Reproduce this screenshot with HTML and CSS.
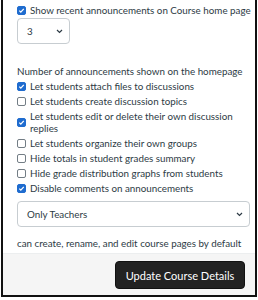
FILE: index.html
```html
<!DOCTYPE html>
<html>
<head>
    <title>Course Settings</title>
    <link rel="stylesheet" href="styles.css">
</head>
<body>
    <div class="panel">
        <div class="content">
            <div class="check"><span class="box on"></span><span>Show recent announcements on Course home page</span></div>
            <div class="select small">
                <span>3</span>
                <svg class="chev" width="7" height="5" viewBox="0 0 7 5"><path d="M1 1l2.5 2.5L6 1" fill="none" stroke="#2d3b45" stroke-width="1.2"/></svg>
            </div>
            <p class="hint first">Number of announcements shown on the homepage</p>
            <div class="options">
                <div class="check"><span class="box on"></span><span>Let students attach files to discussions</span></div>
                <div class="check"><span class="box"></span><span>Let students create discussion topics</span></div>
                <div class="check"><span class="box on"></span><span>Let students edit or delete their own discussion replies</span></div>
                <div class="check"><span class="box"></span><span>Let students organize their own groups</span></div>
                <div class="check"><span class="box"></span><span>Hide totals in student grades summary</span></div>
                <div class="check"><span class="box"></span><span>Hide grade distribution graphs from students</span></div>
                <div class="check"><span class="box on"></span><span>Disable comments on announcements</span></div>
            </div>
            <div class="select wide">
                <span>Only Teachers</span>
                <svg class="chev" width="7" height="5" viewBox="0 0 7 5"><path d="M1 1l2.5 2.5L6 1" fill="none" stroke="#2d3b45" stroke-width="1.2"/></svg>
            </div>
            <p class="hint last">can create, rename, and edit course pages by default</p>
        </div>
        <div class="footer">
            <button class="btn">Update Course Details</button>
        </div>
    </div>
</body>
</html>
```

FILE: styles.css
```css
body {
    margin: 0;
    background: #fff;
    font-family: Lato, 'Noto Sans', sans-serif;
    font-size: 9.8px;
    color: #2d3b45;
}
.panel {
    margin-left: 1px;
    width: 256px;
    border: 2px solid #111;
    border-top: none;
    box-sizing: border-box;
}
.content {
    padding: 4px 0 0 14px;
}
.check {
    display: flex;
    align-items: center;
    gap: 4px;
    line-height: 12px;
}
.box {
    flex: none;
    width: 7px;
    height: 7px;
    border: 1px solid #737d85;
    border-radius: 2px;
    background: #fff;
}
.box.on {
    border-color: #1f6ccf;
    background: #1f6ccf url("data:image/svg+xml,%3Csvg xmlns='http://www.w3.org/2000/svg' viewBox='0 0 8 8'%3E%3Cpath d='M1.5 4.2l1.7 1.7 3.4-3.8' fill='none' stroke='white' stroke-width='1.4'/%3E%3C/svg%3E") center/7px 7px no-repeat;
}
.select {
    display: flex;
    align-items: center;
    justify-content: space-between;
    height: 26px;
    padding: 0 6px 0 9px;
    border: 1px solid #c7cdd1;
    border-radius: 4px;
    box-sizing: border-box;
    margin-top: 2px;
}
.select.small {
    width: 53px;
}
.select.wide {
    width: 233px;
    margin-top: 7px;
}
.hint {
    margin: 0;
    line-height: 12px;
}
.hint.first {
    margin-top: 21px;
}
.hint.last {
    margin-top: 10px;
}
.options .check {
    margin-top: 3px;
}
.footer {
    margin-top: 4px;
    background: #f5f5f5;
    border-top: 1px solid #eceeef;
    padding: 7px 10px 6px;
    display: flex;
    justify-content: flex-end;
}
.btn {
    font-family: Lato, sans-serif;
    font-size: 11px;
    color: #fff;
    background: #222;
    border: 1px solid #111;
    border-radius: 4px;
    height: 28px;
    width: 130px;
    padding: 0;
}
```
